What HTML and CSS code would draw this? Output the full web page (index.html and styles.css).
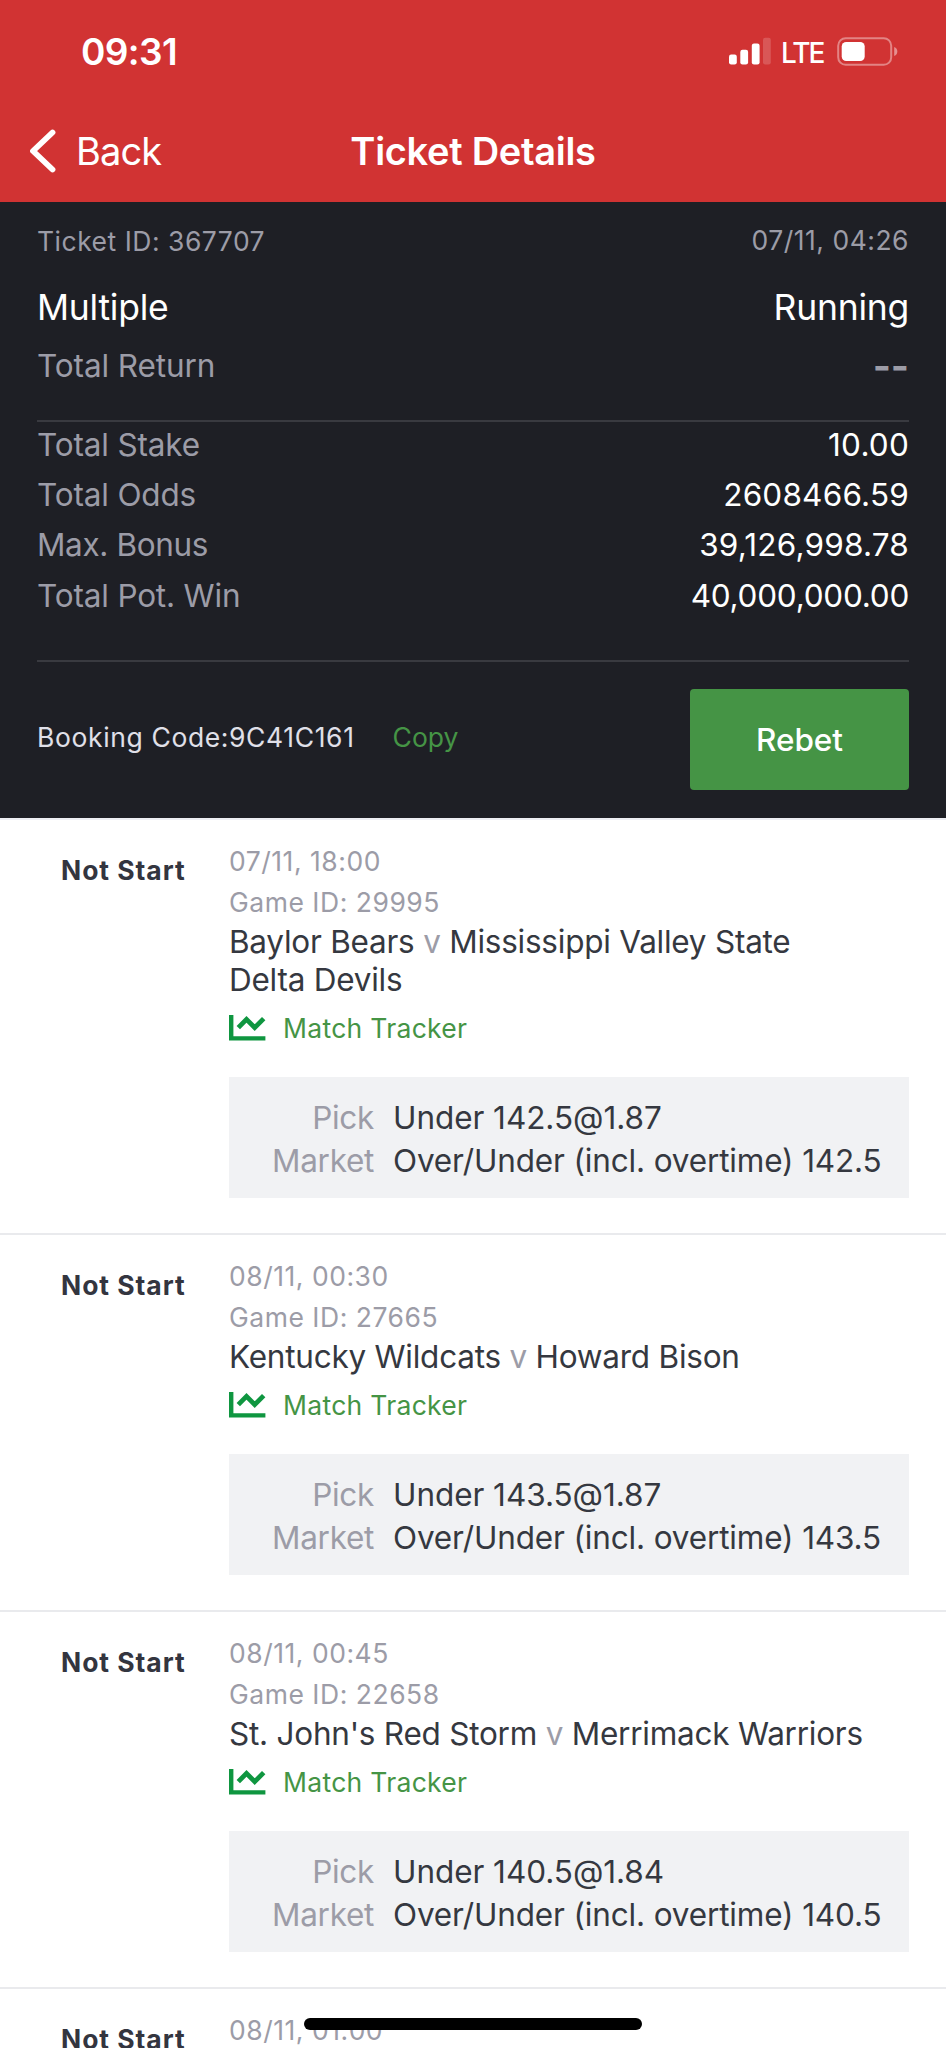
FILE: index.html
```
<!DOCTYPE html>
<html lang="en">
<head>
<meta charset="utf-8">
<title>Ticket Details</title>
<link rel="stylesheet" href="styles.css">
</head>
<body>
<svg class="defs" width="0" height="0" aria-hidden="true">
  <symbol id="chart" viewBox="0 0 37 26">
    <path d="M2.2 0V23.400H36.400" fill="none" stroke="#0f9640" stroke-width="4.400"/>
    <path d="M9.300 12.600L17.500 4.400L25.700 12.600L34.700 3.600" fill="none" stroke="#0f9640" stroke-width="4.800"/>
  </symbol>
</svg>
<div class="screen">
  <header class="header">
    <div class="status-bar">
      <span class="clock">09:31</span>
      <div class="indicators">
        <svg class="signal" width="42" height="28" viewBox="0 0 42 28">
          <rect x="0" y="17.5" width="7.8" height="10" rx="2.2" fill="#fff"/>
          <rect x="11.3" y="12.7" width="7.8" height="14.8" rx="2.2" fill="#fff"/>
          <rect x="22.8" y="6.6" width="7.8" height="20.9" rx="2.2" fill="#fff"/>
          <rect x="34" y=".8" width="7.8" height="26.7" rx="2.2" fill="#fff" fill-opacity=".18"/>
        </svg>
        <span class="network">LTE</span>
        <svg class="battery" width="61" height="30" viewBox="0 0 61 30">
          <rect x="1.2" y="1.2" width="53" height="26.6" rx="7.5" fill="none" stroke="#fff" stroke-opacity=".4" stroke-width="2"/>
          <rect x="4.7" y="5" width="23" height="19" rx="4.5" fill="#fff"/>
          <path d="M57.2 10C61.4 11.500 61.4 17.500 57.2 19Z" fill="#fff" fill-opacity=".45"/>
        </svg>
      </div>
    </div>
    <nav class="nav">
      <div class="back">
        <svg width="28" height="44" viewBox="0 0 28 44"><path d="M23.500 3.500L4 22L23.500 40.500" fill="none" stroke="#fff" stroke-width="5.800" stroke-linecap="round" stroke-linejoin="round"/></svg>
        <span>Back</span>
      </div>
      <h1 class="title">Ticket Details</h1>
    </nav>
  </header>

  <section class="summary">
    <div class="row meta"><span>Ticket ID: 367707</span><span class="placed">07/11, 04:26</span></div>
    <div class="row kind"><span>Multiple</span><span>Running</span></div>
    <div class="row return"><span>Total Return</span><span class="dashes">--</span></div>
    <div class="totals">
      <div class="row total"><span>Total Stake</span><span class="value">10.00</span></div>
      <div class="row total"><span>Total Odds</span><span class="value">2608466.59</span></div>
      <div class="row total"><span class="tight">Max. Bonus</span><span class="value">39,126,998.78</span></div>
      <div class="row total"><span>Total Pot. Win</span><span class="value snug">40,000,000.00</span></div>
    </div>
    <div class="booking">
      <span class="code">Booking Code:9C41C161</span>
      <a class="copy">Copy</a>
      <button class="rebet">Rebet</button>
    </div>
  </section>

  <main class="games">
    <article class="game">
      <div class="state">Not Start</div>
      <div class="info">
        <div class="sub">07/11, 18:00</div>
        <div class="sub">Game ID: 29995</div>
        <div class="teams">Baylor Bears <i>v</i> Mississippi Valley State<br>Delta Devils</div>
        <div class="tracker"><svg width="37" height="26"><use href="#chart"/></svg><span>Match Tracker</span></div>
        <dl class="bet">
          <dt>Pick</dt><dd class="pick">Under 142.5@1.87</dd>
          <dt>Market</dt><dd>Over/Under (incl. overtime) 142.5</dd>
        </dl>
      </div>
    </article>
    <article class="game">
      <div class="state">Not Start</div>
      <div class="info">
        <div class="sub">08/11, 00:30</div>
        <div class="sub">Game ID: 27665</div>
        <div class="teams">Kentucky Wildcats <i>v</i> Howard Bison</div>
        <div class="tracker"><svg width="37" height="26"><use href="#chart"/></svg><span>Match Tracker</span></div>
        <dl class="bet">
          <dt>Pick</dt><dd class="pick">Under 143.5@1.87</dd>
          <dt>Market</dt><dd>Over/Under (incl. overtime) 143.5</dd>
        </dl>
      </div>
    </article>
    <article class="game">
      <div class="state">Not Start</div>
      <div class="info">
        <div class="sub">08/11, 00:45</div>
        <div class="sub">Game ID: 22658</div>
        <div class="teams">St. John's Red Storm <i>v</i> Merrimack Warriors</div>
        <div class="tracker"><svg width="37" height="26"><use href="#chart"/></svg><span>Match Tracker</span></div>
        <dl class="bet">
          <dt>Pick</dt><dd class="pick">Under 140.5@1.84</dd>
          <dt>Market</dt><dd>Over/Under (incl. overtime) 140.5</dd>
        </dl>
      </div>
    </article>
    <article class="game">
      <div class="state">Not Start</div>
      <div class="info">
        <div class="sub">08/11, 01:00</div>
      </div>
    </article>
  </main>
  <div class="home-indicator"></div>
</div>
</body>
</html>
```
FILE: styles.css
```
* { box-sizing: border-box; margin: 0; padding: 0; }

body {
  background: #fff;
  font-family: Inter, "Liberation Sans", sans-serif;
  color: #353840;
}

.defs { display: block; }

.screen {
  position: relative;
  width: 946px;
  height: 2048px;
  overflow: hidden;
}

/* Header */
.header {
  height: 202px;
  background: #d13333;
  color: #fff;
}
.status-bar {
  display: flex;
  justify-content: space-between;
  height: 101px;
  padding: 0 48px 0 81px;
}
.clock {
  font-size: 37px;
  font-weight: 600;
  line-height: 103px;
  letter-spacing: -.6px;
}
.indicators { display: flex; align-items: flex-start; }
.signal { margin-top: 37px; }
.network {
  width: 55px;
  margin-left: 10px;
  font-size: 28px;
  font-weight: 500;
  line-height: 106px;
  letter-spacing: -2px;
}
.battery { margin-top: 37px; margin-left: 1px; }

.nav {
  display: grid;
  grid-template-columns: 1fr auto 1fr;
  align-items: center;
  height: 100px;
}
.back {
  display: flex;
  align-items: center;
  padding-left: 29px;
  font-size: 38px;
  line-height: 50px;
  letter-spacing: -.9px;
}
.back span { margin-left: 19px; }
.title {
  font-size: 38px;
  font-weight: 600;
  line-height: 50px;
  letter-spacing: -.3px;
}

/* Ticket summary */
.summary {
  height: 616px;
  padding: 19px 37px 0;
  background: #1e1f25;
  color: #9c9ca7;
}
.row { display: flex; justify-content: space-between; }
.meta { font-size: 26.5px; line-height: 41px; letter-spacing: .5px; }
.placed { position: relative; top: -1px; }
.kind {
  margin-top: 16px;
  color: #fff;
  font-size: 35.5px;
  line-height: 60px;
  letter-spacing: -.25px;
}
.return {
  height: 82px;
  font-size: 31.5px;
  line-height: 56px;
  letter-spacing: -.1px;
}
.dashes { font-size: 39px; font-weight: 700; }
.totals {
  height: 242px;
  border: solid #393a40;
  border-width: 2px 0;
}
.total {
  margin-bottom: 4.200px;
  font-size: 31.5px;
  line-height: 46px;
  letter-spacing: -.17px;
}
.value { color: #fff; letter-spacing: .2px; }
.tight { letter-spacing: -.35px; }
.snug { letter-spacing: -.25px; }
.booking { display: flex; padding-top: 27px; }
.code {
  color: #e0e0e9;
  font-size: 26.5px;
  line-height: 97px;
  letter-spacing: .62px;
}
.copy {
  margin-left: 38px;
  color: #459445;
  font-size: 26.5px;
  line-height: 97px;
}
.rebet {
  width: 219px;
  height: 101px;
  margin-left: auto;
  border: 0;
  border-radius: 4px;
  background: #459445;
  color: #fff;
  font: 500 31.5px/101px Inter, "Liberation Sans", sans-serif;
}

/* Games */
.games { border-top: 2px solid #eeeff4; }
.game {
  display: flex;
  padding: 21px 37px 35px 61px;
  border-bottom: 2px solid #e9eaed;
}
.state {
  width: 168px;
  padding-top: 9px;
  color: #33353f;
  font-size: 26.5px;
  font-weight: 700;
  line-height: 40px;
  letter-spacing: .95px;
}
.info { width: 680px; }
.sub {
  color: #9c9ca7;
  font-size: 26.5px;
  line-height: 41px;
  letter-spacing: .52px;
}
.teams {
  font-size: 31.5px;
  line-height: 38px;
  letter-spacing: -.24px;
  white-space: nowrap;
}
.teams i { color: #9c9ca7; font-style: normal; }
.tracker {
  display: flex;
  align-items: center;
  height: 40px;
  margin-top: 9px;
  color: #459445;
  font-size: 26.5px;
  letter-spacing: .3px;
}
.tracker span { margin-left: 17px; }
.bet {
  display: grid;
  grid-template-columns: 145px 1fr;
  column-gap: 19px;
  height: 121px;
  margin-top: 29px;
  padding-top: 19px;
  background: #f1f2f4;
  font-size: 31.5px;
  line-height: 43px;
  grid-auto-rows: 43px;
}
.bet dt { color: #9c9ca7; text-align: right; letter-spacing: -.3px; }
.bet dd { letter-spacing: -.15px; white-space: nowrap; }
.bet .pick { letter-spacing: -.05px; }

.home-indicator {
  position: absolute;
  left: 304px;
  top: 2018px;
  width: 338px;
  height: 12px;
  border-radius: 6px;
  background: #000;
}
```
